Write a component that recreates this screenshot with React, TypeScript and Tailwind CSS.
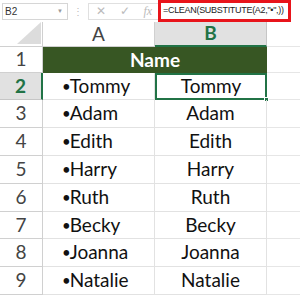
import React from "react";

const rows: { n: number; h: string; name: string }[] = [
  { n: 2, h: "h-[27px]", name: "Tommy" },
  { n: 3, h: "h-[28px]", name: "Adam" },
  { n: 4, h: "h-[28px]", name: "Edith" },
  { n: 5, h: "h-[28px]", name: "Harry" },
  { n: 6, h: "h-[28px]", name: "Ruth" },
  { n: 7, h: "h-[27px]", name: "Becky" },
  { n: 8, h: "h-[28px]", name: "Joanna" },
  { n: 9, h: "h-[28px]", name: "Natalie" },
];

export default function App() {
  return (
    <div className="w-[300px] h-[297px] overflow-hidden bg-white" style={{ fontFamily: "Lato, 'Open Sans', sans-serif" }}>
      {/* formula bar */}
      <div className="h-[22px] flex items-center relative">
        <div className="ml-[2px] w-[66px] h-[17px] border border-[#d6d6d6] flex items-center justify-between px-[2px] text-[10px] text-[#333]" style={{ fontFamily: "'Liberation Sans', sans-serif" }}>
          <span>B2</span>
          <span className="text-[6px] text-[#999] mr-[2px]">▼</span>
        </div>
        <div className="w-[20px] flex justify-center text-[#bbb] text-[10px]">⋮</div>
        <div className="w-[72px] h-[17px] border border-[#e0e0e0] flex items-center justify-around text-[#bbb] text-[12px]">
          <span>✕</span>
          <span>✓</span>
          <span className="italic" style={{ fontFamily: "'Liberation Serif', serif" }}>fx</span>
        </div>
        <div className="absolute left-[158px] top-0 w-[133px] h-[22px] border-[3px] border-[#e8141b] flex items-center pl-[2px] text-[9px] text-[#222] tracking-[-0.3px] whitespace-nowrap overflow-hidden" style={{ fontFamily: "'Liberation Sans', sans-serif" }}>
          =CLEAN(SUBSTITUTE(A2,"•",))
        </div>
      </div>
      {/* grid */}
      <div className="grid grid-cols-[43px_112px_112px_1fr] text-[19px] text-[#111]">
        {/* header row */}
        <div className="h-[25px] border-r border-b border-[#d0d0d0] relative">
          <svg className="absolute right-[1px] bottom-[2px]" width="24" height="22" viewBox="0 0 24 22">
            <polygon points="24,0 24,22 0,22" fill="#dcdcdc" />
          </svg>
        </div>
        <div className="h-[25px] border-r border-b border-[#d0d0d0] flex items-center justify-center text-[#444]">A</div>
        <div className="h-[25px] border-r border-b-2 border-b-[#217346] border-r-[#c6c6c6] bg-[#e1e1e1] flex items-center justify-center font-bold text-[#217346]">B</div>
        <div className="h-[25px] border-b border-[#e6e6e6]"></div>

        {/* row 1 */}
        <div className="h-[26px] border-r border-b border-[#d0d0d0] flex items-center justify-center text-[#444]">1</div>
        <div className="col-span-2 h-[26px] bg-[#375623] flex items-center justify-center font-bold text-white">Name</div>
        <div className="h-[26px] border-b border-[#e6e6e6]"></div>

        {rows.map((r) => (
          <React.Fragment key={r.n}>
            <div
              className={`${r.h} border-b flex items-center justify-center ${
                r.n === 2
                  ? "bg-[#e1e1e1] border-r-2 border-r-[#217346] border-b-[#c6c6c6] font-bold text-[#217346]"
                  : "border-r border-[#d0d0d0] text-[#444]"
              }`}
            >
              {r.n}
            </div>
            <div className={`${r.h} border-r border-b border-[#e2e2e2] flex items-center pl-[19px]`}>
              <span className="text-[15px] mr-[-1px]">•</span>
              {r.name}
            </div>
            <div
              className={`${r.h} flex items-center justify-center relative ${
                r.n === 2 ? "border-2 border-[#217346]" : "border-r border-b border-[#e2e2e2]"
              }`}
            >
              {r.name}
              {r.n === 2 && <div className="absolute right-[-4px] bottom-[-4px] w-[5px] h-[5px] bg-[#217346] border border-white"></div>}
            </div>
            <div className={`${r.h} border-b border-[#e6e6e6]`}></div>
          </React.Fragment>
        ))}
      </div>
    </div>
  );
}
